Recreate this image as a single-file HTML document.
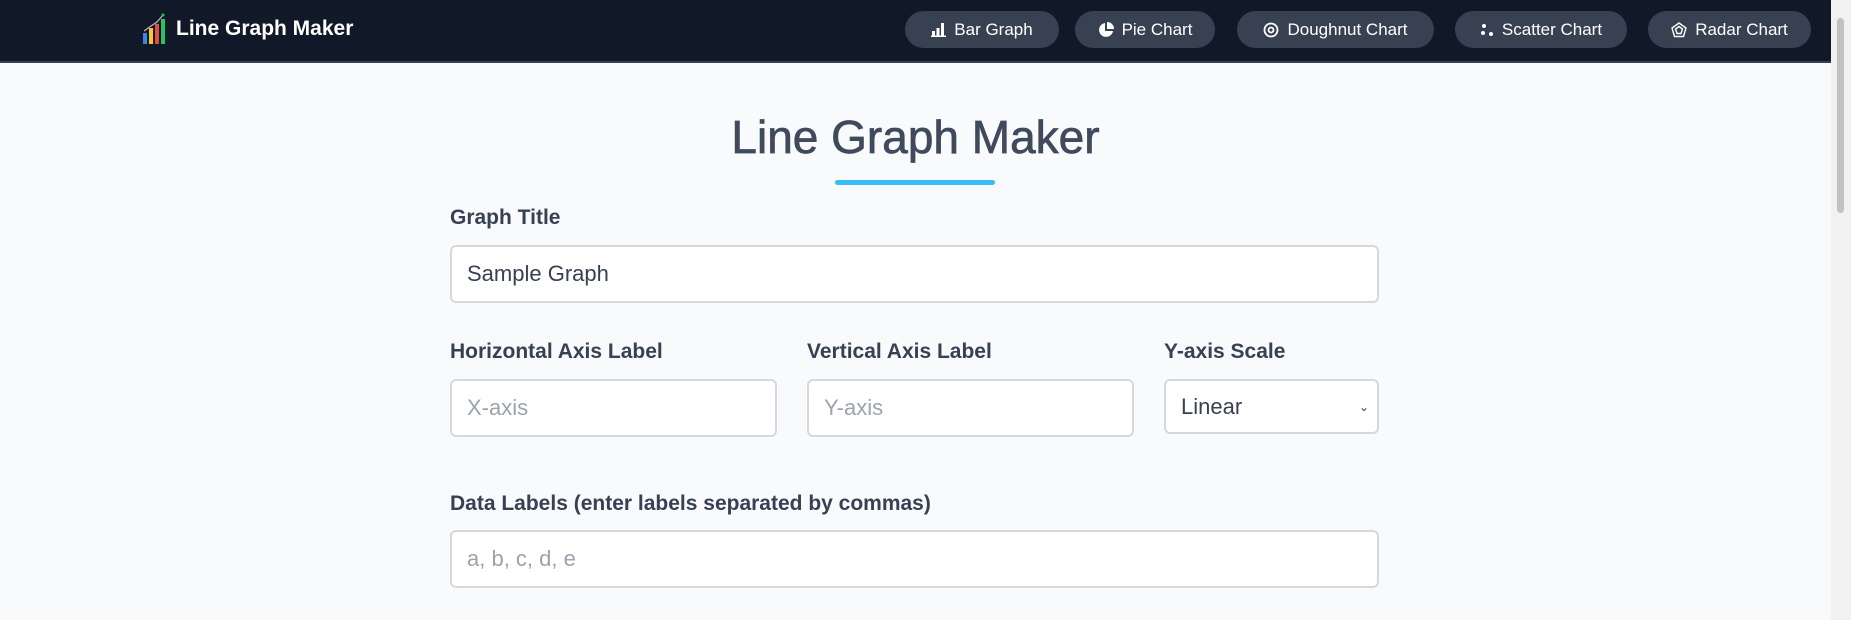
<!DOCTYPE html>
<html><head><meta charset="utf-8"><style>
*{box-sizing:border-box;margin:0;padding:0}
body{width:1851px;height:620px;overflow:hidden;background:#f8fafc;font-family:"Liberation Sans",sans-serif;position:relative}
.nav{position:absolute;left:0;top:0;width:1831px;height:63px;background:#111827;border-bottom:2px solid #374151}
.logo{position:absolute;left:142px;top:13px;display:flex;align-items:center;color:#fff;font-weight:bold;font-size:21px}
.logo svg{margin-right:6px}
.btn{position:absolute;top:11px;height:37px;border-radius:19px;background:#374151;color:#fff;font-size:17px;display:flex;align-items:center;justify-content:center;gap:8px}
.sb{position:absolute;right:0;top:0;width:20px;height:620px;background:#f1f1f1}
.sb div{position:absolute;left:6px;top:18px;width:7px;height:195px;background:#c1c1c1;border-radius:4px}
h1{position:absolute;left:0;width:1831px;top:110px;text-align:center;font-size:46px;font-weight:normal;color:#3f4b5c;-webkit-text-stroke:0.7px #3f4b5c}
.ul{position:absolute;left:835px;top:180px;width:160px;height:5px;border-radius:3px;background:#38bdf8}
.lb{position:absolute;font-size:21px;color:#374151;font-weight:bold;}
.in{position:absolute;background:#fff;border:2px solid #d5d8dd;border-radius:6px;font-size:22px;color:#9ca3af;padding-left:15px;display:flex;align-items:center}
</style></head><body>
<div class="nav">
 <div class="logo"><svg width="28" height="32" viewBox="0 0 28 32"><rect x="1" y="20" width="4" height="11" fill="#3b82f6"/><rect x="7" y="15" width="4" height="16" fill="#facc15"/><rect x="13" y="11" width="4" height="20" fill="#ef4444"/><rect x="19" y="6" width="4" height="25" fill="#22c55e"/><polyline points="2,18 9,13 15,9 21,2" fill="none" stroke="#bbb" stroke-width="1.2"/><circle cx="21" cy="2" r="1.5" fill="#22c55e"/></svg>Line Graph Maker</div>
 <div class="btn" style="left:905px;width:154px"><svg width="15" height="15" viewBox="0 0 15 15" fill="#fff"><rect x="1" y="9" width="3" height="5"/><rect x="5.5" y="6" width="3" height="8"/><rect x="10" y="1" width="3" height="13"/><rect x="0" y="13.5" width="15" height="1.5"/></svg>Bar Graph</div>
 <div class="btn" style="left:1075px;width:140px"><svg width="16" height="16" viewBox="0 0 16 16" fill="#fff"><path d="M7 1A7 7 0 1 0 15 9H7Z"/><path d="M9 0V7H16A7 7 0 0 0 9 0Z"/></svg>Pie Chart</div>
 <div class="btn" style="left:1237px;width:197px"><svg width="16" height="16" viewBox="0 0 16 16" fill="none" stroke="#fff" stroke-width="1.8"><circle cx="8" cy="8" r="6.5"/><circle cx="8" cy="8" r="2.5"/></svg>Doughnut Chart</div>
 <div class="btn" style="left:1455px;width:172px"><svg width="14" height="14" viewBox="0 0 14 14" fill="#fff"><circle cx="4" cy="3" r="2"/><circle cx="3" cy="10" r="2"/><circle cx="11" cy="11" r="2"/></svg>Scatter Chart</div>
 <div class="btn" style="left:1648px;width:163px"><svg width="16" height="16" viewBox="0 0 16 16" fill="none" stroke="#fff" stroke-width="1.4"><path d="M8 1L15 6L12.5 14.5H3.5L1 6Z"/><path d="M8 4.5L11.5 7L10 11.5H6L4.5 7Z"/></svg>Radar Chart</div>
</div>
<div class="sb"><div></div></div>
<h1>Line Graph Maker</h1>
<div class="ul"></div>
<div class="lb" style="left:450px;top:206px">Graph Title</div>
<div class="in" style="left:450px;top:245px;width:929px;height:58px;color:#374151">Sample Graph</div>
<div class="lb" style="left:450px;top:340px">Horizontal Axis Label</div>
<div class="lb" style="left:807px;top:340px">Vertical Axis Label</div>
<div class="lb" style="left:1164px;top:340px">Y-axis Scale</div>
<div class="in" style="left:450px;top:379px;width:327px;height:58px">X-axis</div>
<div class="in" style="left:807px;top:379px;width:327px;height:58px">Y-axis</div>
<div class="in" style="left:1164px;top:379px;width:215px;height:55px;color:#374151">Linear<span style="position:absolute;right:8px;font-size:12px">&#8964;</span></div>
<div class="lb" style="left:450px;top:492px">Data Labels (enter labels separated by commas)</div>
<div class="in" style="left:450px;top:530px;width:929px;height:58px">a, b, c, d, e</div>
</body></html>
